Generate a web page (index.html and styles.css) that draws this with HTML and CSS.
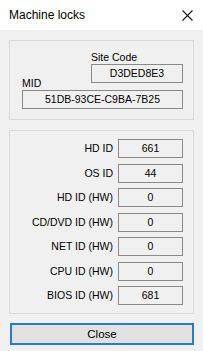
FILE: index.html
```html
<!DOCTYPE html>
<html lang="en">
<head>
  <meta charset="UTF-8">
  <title>Machine locks</title>
  <link rel="stylesheet" href="styles.css">
</head>
<body>
  <div class="window">

    <!-- title bar -->
    <div class="titlebar">
      <span class="title">Machine locks</span>
      <span class="close-x">
        <svg width="11" height="11" viewBox="0 0 11 11">
          <path d="M0.5 0.5 L10.5 10.5 M10.5 0.5 L0.5 10.5" stroke="#1a1a1a" stroke-width="1.1" fill="none"/>
        </svg>
      </span>
    </div>

    <div class="content">
      <!-- site code / mid -->
      <div class="group group-top">
        <div class="top-row">
          <span class="lbl">MID</span>
          <div class="site-block">
            <span class="lbl">Site Code</span>
            <div class="field site-field">D3DED8E3</div>
          </div>
        </div>
        <div class="field mid-field">51DB-93CE-C9BA-7B25</div>
      </div>

      <!-- ids -->
      <div class="group group-ids">
        <div class="id-row"><span class="lbl">HD ID</span><div class="field id-field">661</div></div>
        <div class="id-row"><span class="lbl">OS ID</span><div class="field id-field">44</div></div>
        <div class="id-row"><span class="lbl">HD ID (HW)</span><div class="field id-field">0</div></div>
        <div class="id-row"><span class="lbl">CD/DVD ID (HW)</span><div class="field id-field">0</div></div>
        <div class="id-row"><span class="lbl">NET ID (HW)</span><div class="field id-field">0</div></div>
        <div class="id-row"><span class="lbl">CPU ID (HW)</span><div class="field id-field">0</div></div>
        <div class="id-row"><span class="lbl">BIOS ID (HW)</span><div class="field id-field">681</div></div>
      </div>

      <button class="close-btn">Close</button>
    </div>

  </div>
</body>
</html>
```

FILE: styles.css
```css
/* base */
body {
  margin: 0;
  padding: 0;
  font-family: "Liberation Sans", Arial, sans-serif;
  font-size: 10px;
  color: #000;
  background: #f0f0f0;
}
.window {
  width: 203px;
  height: 351px;
  background: #f0f0f0;
  overflow: hidden;
}

/* title bar */
.titlebar {
  height: 30px;
  background: #fff;
  display: flex;
  align-items: center;
  justify-content: space-between;
  padding: 0 9px 0 9px;
}
.title {
  font-size: 12px;
  color: #000;
}
.close-x {
  display: flex;
  margin-right: 1px;
}

/* content */
.content {
  padding: 10px 9px 0 9px;
}
.group {
  border: 1px solid #d9d9d9;
  box-sizing: border-box;
}
.lbl {
  font-size: 10.5px;
  line-height: 13px;
  white-space: nowrap;
}
.field {
  border: 1px solid #8a8a8a;
  box-sizing: border-box;
  height: 19px;
  line-height: 17px;
  text-align: center;
  background: #f0f0f0;
  font-size: 10.5px;
}

/* first group */
.group-top {
  padding: 10px 10px 10px 12px;
}
.top-row {
  display: flex;
  align-items: flex-end;
  justify-content: space-between;
}
.site-block {
  display: flex;
  flex-direction: column;
  margin-bottom: 7px;
}
.site-field {
  width: 92px;
}

/* second group */
.group-ids {
  margin-top: 10px;
  padding: 8px 10px 8px 0;
  display: flex;
  flex-direction: column;
  gap: 5.5px;
}
.id-row {
  display: flex;
  align-items: center;
  justify-content: flex-end;
  gap: 5px;
}
.id-field {
  width: 65px;
}

/* close button */
.close-btn {
  display: block;
  width: 184px;
  height: 22px;
  margin: 9px 0 0 1px;
  padding: 0;
  background: #e1e1e1;
  border: 2px solid #2a7bc4;
  font-family: "Liberation Sans", Arial, sans-serif;
  font-size: 11.5px;
  color: #000;
}
```
